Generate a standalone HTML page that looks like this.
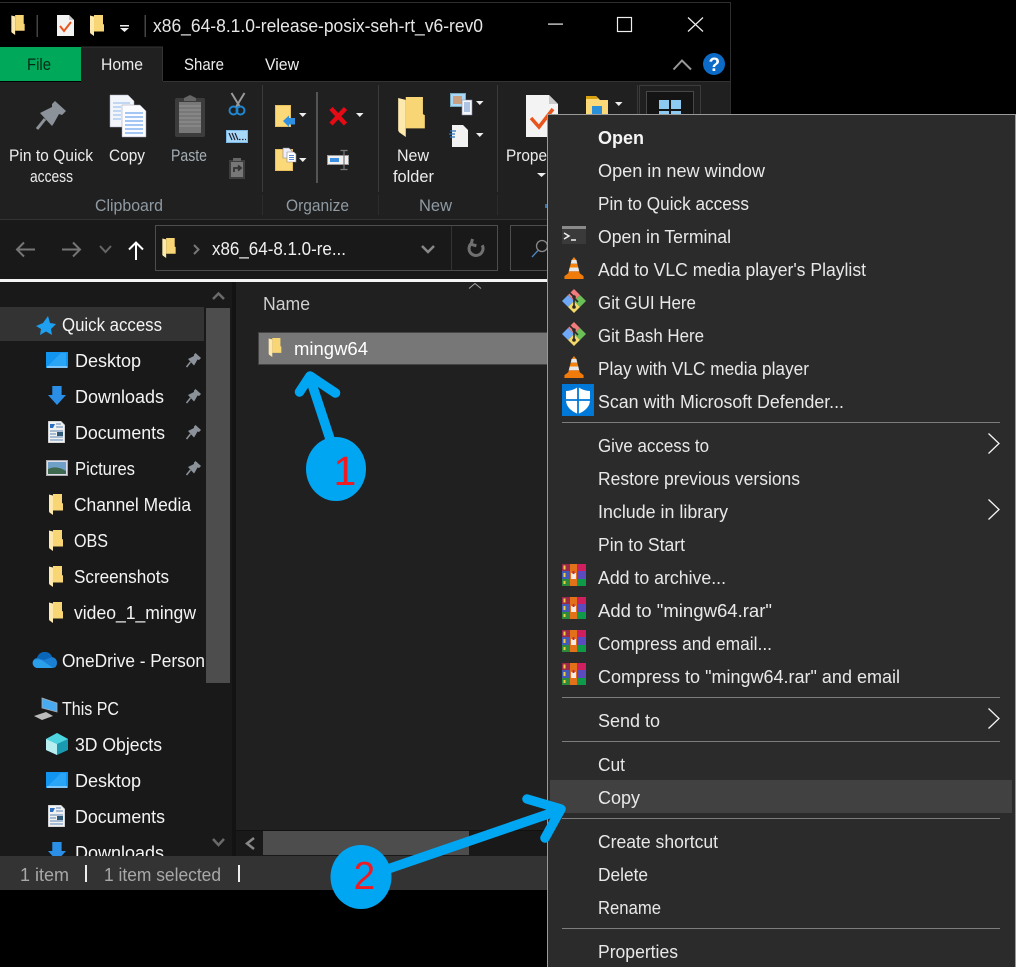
<!DOCTYPE html>
<html><head><meta charset="utf-8"><title>Explorer</title>
<style>
html,body{margin:0;padding:0;background:#000;width:1016px;height:967px;overflow:hidden}
svg{display:block;font-family:"Liberation Sans",sans-serif}
text{font-size:18px;fill:#f0f0f0}
.r text{font-size:16.5px;fill:#ececec}
.l text{font-size:16.5px;fill:#8f9aa3}
.n text{fill:#f4f4f4}
.m text{fill:#e8e8e8}
.s text{fill:#a8a8a8}
</style></head><body>
<svg width="1016" height="967" viewBox="0 0 1016 967" xmlns="http://www.w3.org/2000/svg">
<defs>
<symbol id="folder" viewBox="0 0 14 21">
<path d="M4 0H13V9L14 9.500V16.500H4Z" fill="#f9d675"/>
<path d="M0 0.500L4 1.500V21L0.500 18.500L0 17.500Z" fill="#fde9ad"/>
</symbol>
<symbol id="pin" viewBox="0 0 30 30">
<path d="M19 0L30 10L26 14L23 13L18 22L16 25L4 12L8 10L16 6L16 3Z" fill="#8b9299"/>
<path d="M9 18L1 28" stroke="#8b9299" stroke-width="3"/>
</symbol>
<symbol id="desk" viewBox="0 0 22 16">
<rect width="22" height="16" fill="#1295f0"/>
<path d="M2 14L15 1H20V14Z" fill="#2aa5f5"/>
<rect x="1" y="14.500" width="20" height="1" fill="#e8f4ff"/>
</symbol>
<symbol id="docs" viewBox="0 0 17 22">
<path d="M0 0H13L17 4V22H0Z" fill="#f2f2f2" stroke="#888" stroke-width=".6"/>
<path d="M2 3H7L5 7H2Z" fill="#2a6fc0"/>
<path d="M8 3h5M8 6h7M2 10h13M2 13h6M2 16h13M2 19h13" stroke="#5f87b5" stroke-width="1"/>
<rect x="9" y="11" width="6" height="4" fill="#2f5a78"/>
</symbol>
<symbol id="down" viewBox="0 0 18 19">
<path d="M4.300 0H13.600V9H18L9 19L0 9H4.300Z" fill="#2b8fe8"/>
</symbol>
<symbol id="git" viewBox="0 0 24 24">
<path d="M12 0L18 6L12 12L6 6Z" fill="#f27b7b"/>
<path d="M0 12L6 6L12 12L6 18Z" fill="#6ea8f7"/>
<path d="M24 12L18 6L12 12L18 18Z" fill="#6cbf58"/>
<path d="M12 24L18 18L12 12L6 18Z" fill="#f3d86a"/>
<path d="M8 4L12 8V19M12 9L16 13" stroke="#2a2a2a" stroke-width="1.600" fill="none"/>
<circle cx="12" cy="8" r="1.800" fill="#2a2a2a"/><circle cx="12" cy="18" r="1.800" fill="#2a2a2a"/>
</symbol>
<symbol id="vlc" viewBox="0 0 20 23">
<path d="M10 0L13 4H7Z" fill="#f5820a"/>
<path d="M7.500 3H12.500L13.500 7H6.500Z" fill="#e8e8e8"/>
<path d="M6.500 7H13.500L14.500 11H5.500Z" fill="#f5820a"/>
<path d="M5.500 11H14.500L15.500 15H4.500Z" fill="#e8e8e8"/>
<path d="M4.500 15H15.500L16 17L20 20V23H0V20L4 17Z" fill="#f07a0a"/>
</symbol>
<symbol id="rar" viewBox="0 0 24 22">
<rect width="24" height="7" fill="#cf1f5f"/><rect width="8" height="7" fill="#9b2a4a"/>
<rect y="7" width="24" height="8" fill="#5a4cc0"/><rect y="7" width="8" height="8" fill="#4458b8"/>
<rect y="15" width="24" height="7" fill="#0f9a4a"/><rect y="15" width="8" height="7" fill="#2d8a3a"/>
<rect x="1.500" y="1.500" width="2" height="4" fill="#f0d040"/><rect x="1.500" y="9" width="2" height="4" fill="#f0d040"/><rect x="1.500" y="17" width="2" height="3" fill="#f0d040"/>
<rect x="8" width="7" height="22" fill="#e2711a"/>
<rect x="9" y="9" width="5" height="6" fill="#f4eaea"/><rect x="10.500" y="7" width="2" height="3" fill="#c03030"/>
</symbol>
</defs>

<rect width="1016" height="967" fill="#000"/>
<path d="M0 2.500H730.500V280" fill="none" stroke="#2e2e2e"/>

<!-- QAT -->
<use href="#folder" x="11" y="15" width="14" height="20"/>
<rect x="36.500" y="15" width="1.500" height="22" fill="#444"/>
<path d="M57 15H69L74 20V36H57Z" fill="#f3f3f3"/>
<path d="M69 15V20H74Z" fill="#c9c9c9"/>
<path d="M60 26L64 31L71 22" stroke="#e8541c" stroke-width="2" fill="none"/>
<use href="#folder" x="90" y="15" width="14" height="21"/>
<rect x="120" y="25" width="9" height="1.500" fill="#eee"/><path d="M120 28H129L124.500 32Z" fill="#eee"/>
<rect x="144.500" y="15" width="1.500" height="22" fill="#444"/>
<text x="153" y="32" textLength="330" lengthAdjust="spacingAndGlyphs" style="fill:#e6e6e6">x86_64-8.1.0-release-posix-seh-rt_v6-rev0</text>

<!-- window controls -->
<rect x="548" y="23.500" width="15" height="1.200" fill="#eee"/>
<rect x="617.500" y="17.500" width="14" height="14" fill="none" stroke="#eee" stroke-width="1.200"/>
<path d="M688 17.500L703 31.500M703 17.500L688 31.500" stroke="#eee" stroke-width="1.200"/>
<path d="M673.500 69.500L682 60.500L691 69.500" fill="none" stroke="#999" stroke-width="2"/>
<circle cx="714" cy="64" r="11" fill="#0b6bc6"/>
<text x="708.500" y="71" style="font-size:19px;fill:#fff;font-weight:bold">?</text>

<!-- tabs -->
<rect x="0" y="47" width="81" height="34" fill="#00a859"/>
<rect x="81" y="47" width="82" height="35" fill="#202020"/>
<path d="M81 47H162.500V81" fill="none" stroke="#333"/>
<rect x="163" y="81" width="568" height="1" fill="#333"/>
<g class="r">
<text x="27" y="70" textLength="24" lengthAdjust="spacingAndGlyphs" style="fill:#032b15">File</text>
<text x="101" y="70" textLength="42" lengthAdjust="spacingAndGlyphs">Home</text>
<text x="184" y="70" textLength="40" lengthAdjust="spacingAndGlyphs">Share</text>
<text x="265" y="70" textLength="34" lengthAdjust="spacingAndGlyphs">View</text>
</g>

<!-- ribbon -->
<rect x="0" y="82" width="730" height="137" fill="#202020"/>
<rect x="0" y="219" width="730" height="1" fill="#333"/>
<g fill="#3a3a3a">
<rect x="262" y="85" width="1" height="107"/><rect x="262" y="195" width="1" height="20" fill="#2c2c2c"/>
<rect x="378" y="85" width="1" height="107"/><rect x="378" y="195" width="1" height="20" fill="#2c2c2c"/>
<rect x="497" y="85" width="1" height="107"/><rect x="497" y="195" width="1" height="20" fill="#2c2c2c"/>
<rect x="637" y="85" width="1" height="30"/>
</g>
<rect x="316" y="92" width="2" height="91" fill="#555"/>
<!-- pin big -->
<use href="#pin" x="36" y="101" width="30" height="30"/>
<!-- copy -->
<path d="M110 95H128L134 101V127H110Z" fill="#f2f6fb" stroke="#aab" stroke-width=".5"/>
<path d="M113 103h17M113 107h8M113 111h8M113 115h8M113 119h8" stroke="#8db7e8"/>
<path d="M122 105H140L146 111V137H122Z" fill="#fafcff" stroke="#99a" stroke-width=".5"/>
<path d="M125 113h18M125 117h18M125 121h18M125 125h18M125 129h18M125 133h18" stroke="#4f8fea"/>
<!-- paste -->
<rect x="175" y="98" width="30" height="39" rx="2" fill="#3c3c3c"/>
<rect x="179" y="102" width="22" height="31" fill="#787878"/>
<path d="M179 106h22M179 110h22M179 114h22M179 118h22M179 122h22M179 126h22" stroke="#959595"/>
<path d="M184 98L190 95L196 98V101H184Z" fill="#666"/>
<!-- cut -->
<path d="M231.500 93L240 107M244.500 93L236 107" stroke="#9a9a9a" stroke-width="2" fill="none"/>
<circle cx="233.500" cy="110.500" r="4" fill="none" stroke="#1f86cf" stroke-width="2"/>
<circle cx="240.500" cy="110.500" r="4" fill="none" stroke="#1f86cf" stroke-width="2"/>
<!-- copy path -->
<rect x="226.500" y="130.500" width="21" height="12" fill="#a8d8f8" stroke="#7ab8e8"/>
<path d="M229 133L232 140M232 133L235 140M235 133L238 140" stroke="#223" stroke-width="1.200"/>
<path d="M239 139.500h1.500M242 139.500h1.500M245 139.500h1" stroke="#223" stroke-width="1.200"/>
<!-- paste shortcut -->
<rect x="229" y="160" width="16" height="19" fill="#3e3e3e"/><rect x="231" y="162" width="12" height="15" fill="#777"/>
<path d="M233 158H241V161H233Z" fill="#666"/>
<path d="M234 172V168H240M238 165.500L241 168L238 170.500" stroke="#333" stroke-width="1.800" fill="none"/>
<!-- move to -->
<rect x="275.500" y="105.500" width="15" height="21" fill="#fbd878" stroke="#e8c060"/>
<path d="M283 121L289 115.500V118H295V124.500H289V127Z" fill="#2f8fe0"/>
<path d="M299 113H306.500L302.750 117Z" fill="#eee"/>
<!-- copy to -->
<rect x="275.500" y="149.500" width="17" height="21" fill="#fbd878" stroke="#e8c060"/>
<path d="M283 148H289L292 151V158H283Z" fill="#eef" stroke="#888" stroke-width=".6"/>
<path d="M287 152H294L296 154V162H287Z" fill="#fff" stroke="#888" stroke-width=".6"/>
<path d="M289 155.500h5M289 157.500h5M289 159.500h5" stroke="#5a8ad0"/>
<path d="M299 158H306.500L302.750 162Z" fill="#eee"/>
<!-- delete -->
<path d="M331 108.500L345.500 124M345.500 108.500L331 124" stroke="#e60a14" stroke-width="4.500"/>
<path d="M356 113H363.500L359.750 117Z" fill="#eee"/>
<!-- rename -->
<rect x="327.500" y="155.500" width="21" height="9" fill="#f0f0f0" stroke="#999"/>
<rect x="330" y="158" width="9" height="4" fill="#3a8fe0"/>
<path d="M344 150.500V169.500M340.500 150.500H347.500M340.500 169.500H347.500" stroke="#777" stroke-width="1.200"/>
<!-- new folder -->
<use href="#folder" x="398" y="97" width="27" height="40"/>
<!-- new item -->
<rect x="450.500" y="93.500" width="15" height="13" fill="#a8d8f8" stroke="#7ab"/>
<rect x="453" y="96" width="9" height="8" fill="#c9a080"/>
<path d="M462 100H472V115H462Z" fill="#f4f7fc" stroke="#88a" stroke-width=".6"/>
<path d="M464 103h6M464 105h6M464 107h6M464 109h6M464 111h6" stroke="#6a8fc8"/>
<path d="M476 101H483.500L479.750 105Z" fill="#eee"/>
<!-- easy access -->
<path d="M452 125H463L468 130V147H452Z" fill="#f2f2f2"/>
<path d="M450 131h6M449 134h6M450 137h5" stroke="#2a70c0" stroke-width="1.200"/>
<path d="M476 133H483.500L479.750 137Z" fill="#eee"/>
<!-- properties -->
<path d="M526 95H549L558 104V137H526Z" fill="#f3f3f3"/>
<path d="M549 95V104H558Z" fill="#c9c9c9"/>
<path d="M531 118L539 127L553 109" stroke="#e8541c" stroke-width="3.500" fill="none"/>
<!-- open -->
<path d="M586 96H596L600 100H608V115H586Z" fill="#fbd878"/><path d="M586 96H596L598 99H586Z" fill="#d9a010"/>
<rect x="592" y="106" width="10" height="9" fill="#2a8fd8"/>
<path d="M615 102H622.500L618.750 106Z" fill="#eee"/>
<!-- layout button -->
<rect x="639.500" y="85.500" width="61" height="40" fill="#202020" stroke="#3c3c3c"/>
<rect x="646.500" y="91.500" width="47" height="30" fill="#141414" stroke="#484848"/>
<path d="M659 100H669V109H659ZM671 100H681V109H671ZM659 111H669V120H659ZM671 111H681V120H671Z" fill="#8ccaf2"/>
<g class="r">
<text x="9" y="161" textLength="84" lengthAdjust="spacingAndGlyphs">Pin to Quick</text>
<text x="30" y="182" textLength="43" lengthAdjust="spacingAndGlyphs">access</text>
<text x="109" y="161" textLength="36" lengthAdjust="spacingAndGlyphs">Copy</text>
<text x="171" y="161" textLength="36" lengthAdjust="spacingAndGlyphs" style="fill:#a5aeb5">Paste</text>
<text x="397" y="161" textLength="32" lengthAdjust="spacingAndGlyphs">New</text>
<text x="393" y="182" textLength="41" lengthAdjust="spacingAndGlyphs">folder</text>
<text x="506" y="161" textLength="41" lengthAdjust="spacingAndGlyphs">Prope</text>
</g>
<path d="M537 173H546L541.500 177Z" fill="#eee"/>
<g class="l">
<text x="95" y="211" textLength="68" lengthAdjust="spacingAndGlyphs">Clipboard</text>
<text x="286" y="211" textLength="63" lengthAdjust="spacingAndGlyphs">Organize</text>
<text x="419" y="211" textLength="33" lengthAdjust="spacingAndGlyphs">New</text>
</g>
<rect x="545" y="204" width="2" height="4" fill="#3f6f9f"/>

<!-- address row -->
<rect x="0" y="220" width="730" height="60" fill="#191919"/>
<path d="M35 249.500H17M24 242.500L17 249.500L24 256.500" fill="none" stroke="#757575" stroke-width="2"/>
<path d="M62 249.500H80M73 242.500L80 249.500L73 256.500" fill="none" stroke="#757575" stroke-width="2"/>
<path d="M100 246L105.500 252L111 246" fill="none" stroke="#666" stroke-width="2"/>
<path d="M136 260V243M129 249.500L136 242.500L143 249.500" fill="none" stroke="#fff" stroke-width="2"/>
<rect x="155.500" y="225.500" width="342" height="45" fill="#191919" stroke="#4d4d4d"/>
<rect x="451" y="226" width="1" height="44" fill="#333"/>
<use href="#folder" x="162" y="238" width="14" height="20"/>
<path d="M194 245L198.500 249.500L194 254" fill="none" stroke="#777" stroke-width="2"/>
<text x="212" y="255" textLength="134" lengthAdjust="spacingAndGlyphs">x86_64-8.1.0-re...</text>
<path d="M422 246L428 252L434 246" fill="none" stroke="#888" stroke-width="2.500"/>
<path d="M481 243.500A7 7 0 1 1 470 244.500M470 240V245.500H475.500" fill="none" stroke="#707070" stroke-width="3" transform="rotate(15 475 249)"/>
<rect x="510.500" y="225.500" width="60" height="45" fill="#191919" stroke="#4d4d4d"/>
<circle cx="542" cy="246" r="5.500" fill="none" stroke="#888" stroke-width="1.300"/>
<path d="M538 250.500L532 257" stroke="#4a88c8" stroke-width="1.300"/>

<!-- white line -->
<rect x="0" y="279" width="548" height="3" fill="#f4f4f4"/>

<!-- nav pane -->
<rect x="0" y="282" width="232" height="574" fill="#191919"/>
<rect x="232" y="282" width="4" height="574" fill="#131313"/>
<rect x="236" y="282" width="312" height="574" fill="#202020"/>
<rect x="0" y="307" width="204" height="34" fill="#333"/>
<rect x="206" y="308" width="24" height="375" fill="#4d4d4d"/>
<path d="M213 299L218.500 293.500L224 299" fill="none" stroke="#6a6a6a" stroke-width="2.500"/>
<path d="M213 839L218.500 845L224 839" fill="none" stroke="#6a6a6a" stroke-width="2.500"/>

<path d="M48 316L50 323L56 324L51 329L52 335L46 331.500L40 335L41 329L36 326L43 323Z" fill="#1e9ff0"/>
<use href="#desk" x="46" y="352" width="22" height="16"/>
<use href="#down" x="48" y="386" width="18" height="19"/>
<use href="#docs" x="48" y="421" width="17" height="22"/>
<rect x="46.500" y="460.500" width="21" height="15" fill="#dde" stroke="#aaa"/><path d="M48 462H66V474H48Z" fill="#6fa0c8"/><path d="M48 469Q56 465 66 471V474H48Z" fill="#3f6a50"/>
<use href="#folder" x="49" y="494" width="14" height="21"/>
<use href="#folder" x="49" y="530" width="14" height="21"/>
<use href="#folder" x="49" y="566" width="14" height="21"/>
<use href="#folder" x="49" y="602" width="14" height="21"/>
<use href="#pin" x="186" y="353" width="15" height="15"/>
<use href="#pin" x="186" y="389" width="15" height="15"/>
<use href="#pin" x="186" y="425" width="15" height="15"/>
<use href="#pin" x="186" y="461" width="15" height="15"/>
<path d="M38 668a5 5 0 0 1-1-10q2-6 8-6 5 0 7 5q5 1 5 6 0 5-5 5z" fill="#1b7fd4"/>
<path d="M37 658q2-6 8-6 5 0 7 5l-8 3z" fill="#0a66b8"/>
<path d="M38 668a5 5 0 0 1-4-8q5-2 9 1l10 7z" fill="#2ba0ea"/>
<path d="M42 698L57 703V712L42 708Z" fill="#48aaf0" stroke="#aaa" stroke-width=".8"/>
<path d="M34 716L46 712L53 716L42 720Z" fill="#bbb"/>
<path d="M57 733L68 739V750L57 755L46 750V739Z" fill="#1a9ab0"/>
<path d="M57 733L68 739L57 744L46 739Z" fill="#4fd5e0"/>
<path d="M46 739L57 744V755L46 750Z" fill="#b8eef0"/>
<use href="#desk" x="46" y="772" width="22" height="16"/>
<use href="#docs" x="48" y="805" width="17" height="22"/>
<use href="#down" x="48" y="842" width="18" height="19"/>

<g class="n">
<text x="62" y="331" textLength="100" lengthAdjust="spacingAndGlyphs">Quick access</text>
<text x="75" y="367" textLength="66" lengthAdjust="spacingAndGlyphs">Desktop</text>
<text x="75" y="403" textLength="89" lengthAdjust="spacingAndGlyphs">Downloads</text>
<text x="75" y="439" textLength="90" lengthAdjust="spacingAndGlyphs">Documents</text>
<text x="75" y="475" textLength="60" lengthAdjust="spacingAndGlyphs">Pictures</text>
<text x="74" y="511" textLength="117" lengthAdjust="spacingAndGlyphs">Channel Media</text>
<text x="74" y="547" textLength="34" lengthAdjust="spacingAndGlyphs">OBS</text>
<text x="74" y="583" textLength="95" lengthAdjust="spacingAndGlyphs">Screenshots</text>
<text x="74" y="619" textLength="122" lengthAdjust="spacingAndGlyphs">video_1_mingw</text>
<text x="62" y="667" textLength="143" lengthAdjust="spacingAndGlyphs">OneDrive - Person</text>
<text x="62" y="715" textLength="57" lengthAdjust="spacingAndGlyphs">This PC</text>
<text x="75" y="751" textLength="87" lengthAdjust="spacingAndGlyphs">3D Objects</text>
<text x="75" y="787" textLength="66" lengthAdjust="spacingAndGlyphs">Desktop</text>
<text x="75" y="823" textLength="90" lengthAdjust="spacingAndGlyphs">Documents</text>
<text x="75" y="859" textLength="89" lengthAdjust="spacingAndGlyphs">Downloads</text>
</g>

<!-- content -->
<text x="263" y="310" textLength="47" lengthAdjust="spacingAndGlyphs" style="fill:#cfcfcf">Name</text>
<path d="M469 288.500L475 283.500L481 288.500" fill="none" stroke="#aaa" stroke-width="1"/>
<rect x="258.500" y="332.500" width="290" height="32" fill="#777" stroke="#444"/>
<use href="#folder" x="268" y="338" width="14" height="19"/>
<text x="294" y="355" textLength="74" lengthAdjust="spacingAndGlyphs" style="fill:#fff">mingw64</text>
<!-- h scrollbar -->
<rect x="236" y="830" width="312" height="26" fill="#191919"/>
<rect x="236" y="830" width="312" height="1" fill="#111"/>
<rect x="263" y="831" width="206" height="24" fill="#4d4d4d"/>
<path d="M254 838L247 843.500L254 849" fill="none" stroke="#888" stroke-width="2.500"/>

<!-- status -->
<rect x="0" y="856" width="548" height="34" fill="#333"/>
<g class="s">
<text x="20" y="881" textLength="49" lengthAdjust="spacingAndGlyphs">1 item</text>
<text x="104" y="881" textLength="117" lengthAdjust="spacingAndGlyphs">1 item selected</text>
</g>
<rect x="85" y="865" width="2" height="17" fill="#eee"/>
<rect x="238" y="865" width="2" height="17" fill="#eee"/>

<!-- context menu -->
<rect x="547.500" y="114.500" width="468" height="860" fill="#2b2b2b" stroke="#9a9a9a"/>
<rect x="550" y="780" width="462" height="33" fill="#414141"/>
<g fill="#7d7d7d">
<rect x="562" y="422" width="438" height="1"/>
<rect x="562" y="697" width="438" height="1"/>
<rect x="562" y="741" width="438" height="1"/>
<rect x="562" y="818" width="438" height="1"/>
<rect x="562" y="928" width="438" height="1"/>
</g>
<path d="M988.500 433.500L999 443.500L988.500 453.500M988.500 499.500L999 509.500L988.500 519.500M988.500 708.500L999 718.500L988.500 728.500" fill="none" stroke="#f4f4f4" stroke-width="1.300"/>

<rect x="562" y="226" width="24" height="18" rx="1" fill="#3a3a3a"/><rect x="562" y="226" width="24" height="3" fill="#8a8a8a"/>
<path d="M564 233L569 236L564 239" fill="none" stroke="#f0f0f0" stroke-width="1.500"/><path d="M571 240H576" stroke="#f0f0f0" stroke-width="1.500"/>
<use href="#vlc" x="564" y="257" width="20" height="22"/>
<use href="#git" x="562" y="289" width="24" height="24"/>
<use href="#git" x="562" y="322" width="24" height="24"/>
<use href="#vlc" x="564" y="356" width="20" height="22"/>
<rect x="562" y="384" width="32" height="32" fill="#0078d7"/>
<path d="M578 387Q584 391 590 391V400Q590 409 578 414Q566 409 566 400V391Q572 391 578 387Z" fill="#fff"/>
<path d="M578 387V414M566 400H590" stroke="#0078d7" stroke-width="1.800"/>
<use href="#rar" x="562" y="564" width="24" height="22"/>
<use href="#rar" x="562" y="597" width="24" height="22"/>
<use href="#rar" x="562" y="630" width="24" height="22"/>
<use href="#rar" x="562" y="663" width="24" height="22"/>

<text x="598" y="144" textLength="46" lengthAdjust="spacingAndGlyphs" style="font-weight:bold;fill:#f4f4f4">Open</text>
<g class="m">
<text x="598" y="177" textLength="167" lengthAdjust="spacingAndGlyphs">Open in new window</text>
<text x="598" y="210" textLength="151" lengthAdjust="spacingAndGlyphs">Pin to Quick access</text>
<text x="598" y="243" textLength="133" lengthAdjust="spacingAndGlyphs">Open in Terminal</text>
<text x="598" y="276" textLength="268" lengthAdjust="spacingAndGlyphs">Add to VLC media player's Playlist</text>
<text x="598" y="309" textLength="98" lengthAdjust="spacingAndGlyphs">Git GUI Here</text>
<text x="598" y="342" textLength="106" lengthAdjust="spacingAndGlyphs">Git Bash Here</text>
<text x="598" y="375" textLength="211" lengthAdjust="spacingAndGlyphs">Play with VLC media player</text>
<text x="598" y="408" textLength="246" lengthAdjust="spacingAndGlyphs">Scan with Microsoft Defender...</text>
<text x="598" y="452" textLength="111" lengthAdjust="spacingAndGlyphs">Give access to</text>
<text x="598" y="485" textLength="202" lengthAdjust="spacingAndGlyphs">Restore previous versions</text>
<text x="598" y="518" textLength="130" lengthAdjust="spacingAndGlyphs">Include in library</text>
<text x="598" y="551" textLength="87" lengthAdjust="spacingAndGlyphs">Pin to Start</text>
<text x="598" y="584" textLength="128" lengthAdjust="spacingAndGlyphs">Add to archive...</text>
<text x="598" y="617" textLength="174" lengthAdjust="spacingAndGlyphs">Add to "mingw64.rar"</text>
<text x="598" y="650" textLength="174" lengthAdjust="spacingAndGlyphs">Compress and email...</text>
<text x="598" y="683" textLength="302" lengthAdjust="spacingAndGlyphs">Compress to "mingw64.rar" and email</text>
<text x="598" y="727" textLength="62" lengthAdjust="spacingAndGlyphs">Send to</text>
<text x="598" y="771" textLength="27" lengthAdjust="spacingAndGlyphs">Cut</text>
<text x="598" y="804" textLength="42" lengthAdjust="spacingAndGlyphs">Copy</text>
<text x="598" y="848" textLength="120" lengthAdjust="spacingAndGlyphs">Create shortcut</text>
<text x="598" y="881" textLength="50" lengthAdjust="spacingAndGlyphs">Delete</text>
<text x="598" y="914" textLength="63" lengthAdjust="spacingAndGlyphs">Rename</text>
<text x="598" y="958" textLength="80" lengthAdjust="spacingAndGlyphs">Properties</text>
</g>

<!-- annotations -->
<g fill="none" stroke="#00a6f2" stroke-width="9.500" stroke-linecap="round" stroke-linejoin="round">
<path d="M331 442L310 378M299.500 392L310 376L335.500 393"/>
<path d="M385 870L560 810M527 799L561 809L545 838"/>
</g>
<ellipse cx="336" cy="469" rx="30" ry="32" fill="#00a6f2"/>
<ellipse cx="361" cy="877" rx="30.500" ry="32" fill="#00a6f2"/>
<text x="333.500" y="485" style="font-size:41px;fill:#ed1c24">1</text>
<text x="353.500" y="889" style="font-size:39px;fill:#ed1c24">2</text>
</svg>
</body></html>
